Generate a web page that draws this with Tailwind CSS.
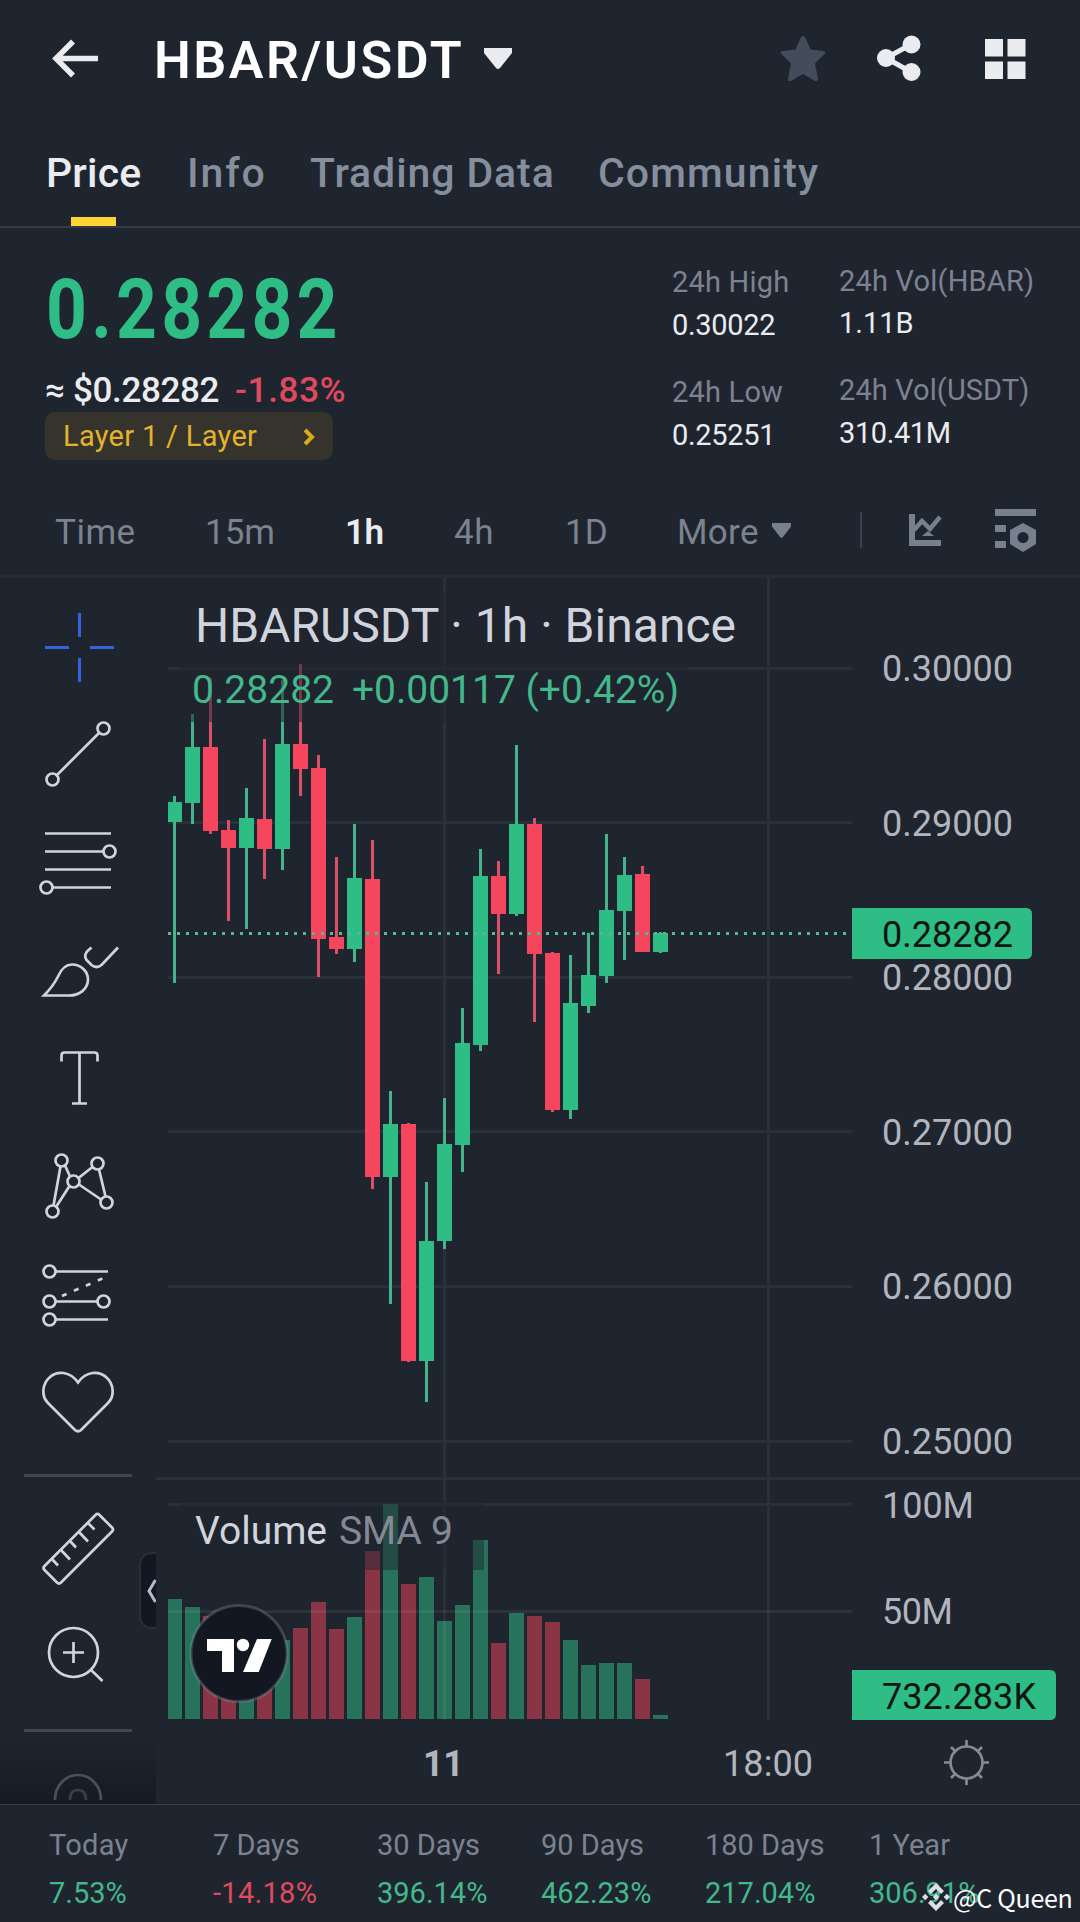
<!DOCTYPE html>
<html lang="en">
<head>
    <meta charset="UTF-8">
    <meta name="viewport" content="width=device-width, initial-scale=1.0">
    <title>HBAR/USDT</title>
    <script src="https://cdn.jsdelivr.net/npm/@tailwindcss/browser@4"></script>
    <style>
        body { font-family: Roboto, 'Noto Sans', sans-serif; }
    </style>
</head>
<body class="w-[1080px] h-[1922px] overflow-hidden bg-[#1f252f] text-[#eaecef] flex flex-col whitespace-nowrap">
    <header class="h-[118px] shrink-0 flex items-center pl-[51px] pr-[54px]">
        <svg class="w-[48px] h-[40px]" viewBox="51 38 48 40" fill="none" stroke="#eaecef" stroke-width="5.5"><path d="M98 57.500H57M73 40.500L56 57.500l17 17"/></svg>
        <h1 class="ml-[55px] mt-[4px] w-[307px] text-[52px] leading-[60px] font-semibold text-white tracking-[2.500px]">HBAR/USDT</h1>
        <svg class="ml-[22px] w-[30px] h-[22px]" viewBox="483 48 30 22" fill="#eaecef"><path d="M484 48h28v5l-12 15q-2 2-4 0l-12-15z"/></svg>
        <svg class="ml-auto w-[48px] h-[48px]" viewBox="778 35 48 48" fill="#434c5a"><path d="M803 36q1.500 0 2.500 2l5 11.500 13 1.500q3 .8 1 3l-9.500 9.500 3 15q0 3.500-3 2.500l-12-7-12 7q-3 1-3-2.500l3-15-9.500-9.500q-2-2.200 1-3l13-1.500 5-11.500q1-2 2.500-2z"/></svg>
        <svg class="ml-[50px] w-[46px] h-[48px]" viewBox="876 35 46 48" fill="#eaecef"><circle cx="911.500" cy="44.500" r="9"/><circle cx="886" cy="58" r="9"/><circle cx="911.500" cy="72" r="9"/><path d="M911 44.500L886 58l25 14" fill="none" stroke="#eaecef" stroke-width="5"/></svg>
        <svg class="ml-[63px] w-[41px] h-[41px]" viewBox="985 38 41 41" fill="#eaecef"><path d="M985 38h18v17.500h-18zM1007.500 38h18v17.500h-18zM985 60.500h18V78h-18zM1007.500 60.500h18V78h-18z"/></svg>
    </header>

    <nav class="h-[110px] shrink-0 border-b-2 border-[#353a44] flex text-[41px] leading-[50px] font-medium text-[#848e9c] pl-[46px] pt-[30px]">
        <div class="w-[141px] relative text-[#eaecef] tracking-[0.200px]">Price
            <span class="absolute left-[25px] top-[69px] w-[45px] h-[9px] bg-[#fcd535]"></span>
        </div>
        <div class="w-[123px] tracking-[1.900px]">Info</div>
        <div class="w-[288px] tracking-[0.900px]">Trading Data</div>
        <div class="tracking-[1.100px]">Community</div>
    </nav>

    <section class="h-[262px] shrink-0 flex pl-[45px]">
        <div class="w-[627px] pt-[33px]">
            <div class="ml-[1px] w-fit text-[84px] leading-[98px] font-bold text-[#2ebd85] tracking-[4.900px] origin-left scale-x-85">0.28282</div>
            <div class="mt-[11px] h-[42px] flex text-[35px] leading-[42px] font-medium">
                <span class="w-[190px] tracking-[-0.350px]">≈ $0.28282</span>
                <span class="text-[#e04a5f] tracking-[0.700px]">-1.83%</span>
            </div>
            <div class="w-[288px] h-[48px] rounded-[10px] bg-[#35332c] flex items-center pl-[18px] pt-[2px] text-[29px] text-[#e2b32b]">
                <span class="tracking-[0.300px]">Layer 1 / Layer</span>
                <svg class="ml-auto mr-[18px] w-[12px] h-[18px]" viewBox="0 0 12 18" fill="none" stroke="#dcaa1e" stroke-width="4"><path d="M2 2l7 7-7 7"/></svg>
            </div>
        </div>
        <div class="w-[167px] pt-[36px] text-[29px] leading-[36px]">
            <div class="text-[#7c8290] tracking-[0.200px]">24h High</div>
            <div class="mt-[7px] tracking-[-0.300px] font-[450]">0.30022</div>
            <div class="mt-[31px] text-[#7c8290] tracking-[0.200px]">24h Low</div>
            <div class="mt-[7px] tracking-[-0.300px] font-[450]">0.25251</div>
        </div>
        <div class="pt-[35px] text-[29px] leading-[36px]">
            <div class="text-[#7c8290] tracking-[0.200px]">24h Vol(HBAR)</div>
            <div class="mt-[6px] font-[450]">1.11B</div>
            <div class="mt-[31px] text-[#7c8290] tracking-[0.100px]">24h Vol(USDT)</div>
            <div class="mt-[7px] tracking-[-0.400px] font-[450]">310.41M</div>
        </div>
    </section>

    <section class="h-[88px] shrink-0 border-b-3 border-[#262c36] flex items-center text-[35px] text-[#7c8290] pl-[55px] pt-[2px]">
        <div class="w-[150px] tracking-[0.500px]">Time</div>
        <div class="w-[140px]">15m</div>
        <div class="w-[109px] font-semibold tracking-[-0.500px] text-[#eaecef]">1h</div>
        <div class="w-[111px] tracking-[0.500px]">4h</div>
        <div class="w-[112px]">1D</div>
        <div class="w-[95px] tracking-[0.300px]">More</div>
        <svg class="mt-[-7px] w-[19px] h-[15px]" viewBox="0 0 19 15" fill="#76808f"><path d="M0 0h19v3.500L11 14q-1.500 1.500-3 0L0 3.500z"/></svg>
        <div class="ml-[69px] mt-[-7px] w-[2px] h-[36px] bg-[#3a414d]"></div>
        <svg class="ml-[46px] mt-[-8px] w-[34px] h-[34px]" viewBox="908 512 34 34" fill="none" stroke="#76808f"><path d="M912 513v32M909 542h32" stroke-width="6"/><path d="M914 529l8-9 8 8 10-12" stroke-width="4.500"/><path d="M922 535l6-5 6 5z" fill="#76808f" stroke="none"/></svg>
        <svg class="ml-[53px] mt-[-7px] w-[42px] h-[44px]" viewBox="995 508 42 44" fill="#76808f"><path d="M995 509h41v7h-41zM995 525h11v7h-11zM995 541h11v7h-11z"/><path fill-rule="evenodd" d="M1023 523l13 7v14l-13 8-13-8v-14zM1023 532a5.500 5.500 0 100 11 5.500 5.500 0 000-11z"/></svg>
    </section>

    <main class="h-[1226px] shrink-0 flex">
        <!-- drawing tools -->
        <aside class="w-[156px] shrink-0 flex flex-col relative overflow-hidden pt-[15px]">
            <svg class="w-full h-[108px] shrink-0" viewBox="0 593 156 108" stroke="#3563e0" stroke-width="3"><path d="M79.500 613v24M79.500 658v24M45 647.500h24M90 647.500h24"/></svg>
            <svg class="w-full h-[108px] shrink-0" viewBox="0 701 156 108" fill="none" stroke="#d1d4dc" stroke-width="2.700"><circle cx="52.500" cy="779.500" r="6"/><circle cx="103.500" cy="728.500" r="6"/><path d="M57 775l42-42"/></svg>
            <svg class="w-full h-[108px] shrink-0" viewBox="0 809 156 108" fill="none" stroke="#d1d4dc" stroke-width="2.700"><path d="M45 833.500h66M45 851.500h58M45 869.500h66M53 887.500h58"/><circle cx="109.500" cy="851.500" r="6"/><circle cx="46.500" cy="887.500" r="6"/></svg>
            <svg class="w-full h-[108px] shrink-0" viewBox="0 917 156 108" fill="none" stroke="#d1d4dc" stroke-width="2.700"><path d="M44 995.500c6-6 10-11 14-19 3-7 7-12 14-12 9 0 16 7 16 15 0 9-8 16-19 16z"/><path d="M91.500 947.500l-4 3.500q-4 4-1 9l5 5q5 4 10 0l16.500-17.500"/></svg>
            <svg class="w-full h-[108px] shrink-0" viewBox="0 1025 156 108" fill="none" stroke="#d1d4dc" stroke-width="2.700"><path d="M61.500 1061.500v-6q0-3 3-3h30q3 0 3 3v6M79.500 1052v52M72 1103.500h15"/></svg>
            <svg class="w-full h-[108px] shrink-0" viewBox="0 1133 156 108" fill="none" stroke="#d1d4dc" stroke-width="2.700"><path d="M60.500 1166.500l-7 39M65 1165.500l5 11M69.500 1186l-13.500 21M78.500 1178l14-11M99 1169.500l6.500 27M79 1184.500l22 15"/><circle cx="61.500" cy="1160.500" r="6"/><circle cx="97.500" cy="1163.500" r="6"/><circle cx="73.500" cy="1181.500" r="6"/><circle cx="52.500" cy="1211.500" r="6"/><circle cx="106.500" cy="1202.500" r="6"/></svg>
            <svg class="w-full h-[108px] shrink-0" viewBox="0 1241 156 108" fill="none" stroke="#d1d4dc" stroke-width="2.700"><path d="M56 1271.500h52M56 1301.500h41M56 1319.500h52"/><path d="M62 1296l44-19" stroke-dasharray="5 8"/><circle cx="49.500" cy="1271.500" r="6"/><circle cx="49.500" cy="1301.500" r="6"/><circle cx="103.500" cy="1301.500" r="6"/><circle cx="49.500" cy="1319.500" r="6"/></svg>
            <svg class="w-full h-[108px] shrink-0" viewBox="0 1349 156 108" fill="none" stroke="#d1d4dc" stroke-width="2.700"><path d="M78 1382.500C70 1371 57 1370.500 50 1377c-8 7-9 19-2 26l27 27q3 2.500 6 0l27-27c7-7 6-19-2-26-7-6.500-20-6-28 5.500z"/></svg>
            <div class="mt-[17px] ml-[24px] w-[108px] h-[3px] shrink-0 bg-[#434651]"></div>
            <svg class="mt-[18px] w-full h-[108px] shrink-0" viewBox="0 1495 156 108" fill="none" stroke="#d1d4dc" stroke-width="2.700"><path d="M95.500 1515q2-2 4 0l12.500 12.500q2 2 0 4L61 1582.500q-2 2-4 0L44.500 1570q-2-2 0-4zM52 1559l6 6.500M61 1550l9 9.500M70 1541l6 6.500M79 1532l9 9.500M88 1523l6.500 6.500"/></svg>
            <svg class="w-full h-[108px] shrink-0" viewBox="0 1603 156 108" fill="none" stroke="#d1d4dc" stroke-width="2.700"><circle cx="73.500" cy="1652.500" r="24.500"/><path d="M63 1652.500h21M73.500 1642v21M91 1670l11.500 11"/></svg>
            <div class="mt-[18px] ml-[24px] w-[108px] h-[3px] shrink-0 bg-[#434651]"></div>
            <div class="mt-[4px] h-[68px] shrink-0 bg-linear-to-b from-[#1f252f] to-[#161a24]">
                <svg class="w-full h-full" viewBox="0 1736 156 68" fill="none" stroke="#4b4f59" stroke-width="2.700"><path d="M55 1800c0-14 10-25 23-25s23 11 23 25"/><path d="M70 1800c0-7 3-10 8-10s8 3 8 10" stroke="#3a3e48"/></svg>
            </div>
            <div class="absolute right-0 top-[974px] w-[17px] h-[77px] rounded-l-[13px] bg-[#131722] border-2 border-r-0 border-[#2a2e39] flex items-center justify-end">
                <svg class="w-[9px] h-[24px]" viewBox="0 0 9 24" fill="none" stroke="#b2bccb" stroke-width="3"><path d="M8.500 1L2 12l6.500 11"/></svg>
            </div>
        </aside>

        <svg id="chart" class="w-[924px] h-[1226px]" viewBox="156 578 924 1226">
            <g fill="#2a303a">
                <path d="M168 667h684v3H168zM168 821h684v3H168zM168 976h684v3H168zM168 1130h684v3H168zM168 1285h684v3H168zM168 1440h684v3H168zM156 1477h924v3H156zM168 1503h684v3H168z"/>
                <path d="M443 578h3v1142h-3zM767 578h3v1142h-3z"/>
            </g>
            <g id="volume"></g>
            <path d="M168 1610h684v3H168z" fill="#fff" fill-opacity=".06"/>
            <path d="M443 1621h3v98h-3z" fill="#fff" fill-opacity=".06"/>
            <g id="candles"></g>
            <path d="M168 933.500H848" stroke="#55b894" stroke-width="3" stroke-dasharray="3 6"/>

            <!-- legends sit on a half transparent plate -->
            <rect x="180" y="592" width="508" height="130" fill="#1f252f" fill-opacity=".55"/>
            <rect x="180" y="1500" width="304" height="70" fill="#1f252f" fill-opacity=".5"/>
            <text x="195" y="642" font-size="48" fill="#d1d4dc" textLength="541">HBARUSDT · 1h · Binance</text>
            <g font-size="39" fill="#42b88b">
                <text x="192" y="703" textLength="142">0.28282</text>
                <text x="352" y="703" textLength="327">+0.00117 (+0.42%)</text>
            </g>
            <text x="195" y="1544" font-size="39" fill="#d1d4dc" textLength="132">Volume</text>
            <text x="339" y="1544" font-size="39" fill="#868993" textLength="114">SMA 9</text>

            <circle cx="239" cy="1653.500" r="48" fill="#131722" stroke="#9aa0ab" stroke-opacity=".3" stroke-width="3"/>
            <path d="M207 1639h27v33h-12v-21h-15zM257 1639h14.700l-13 33H243z" fill="#fff"/>
            <circle cx="243" cy="1645" r="6.200" fill="#fff"/>

            <g font-size="36" fill="#b2b5be">
                <text x="882" y="681" textLength="131">0.30000</text>
                <text x="882" y="836" textLength="131">0.29000</text>
                <text x="882" y="990" textLength="131">0.28000</text>
                <text x="882" y="1145" textLength="131">0.27000</text>
                <text x="882" y="1299" textLength="131">0.26000</text>
                <text x="882" y="1454" textLength="131">0.25000</text>
                <text x="882" y="1518" textLength="92">100M</text>
                <text x="882" y="1624" textLength="71">50M</text>
                <text x="723" y="1776" textLength="90">18:00</text>
                <text x="423" y="1776" font-weight="700" textLength="41">11</text>
            </g>
            <path d="M852 908h174q6 0 6 6v39q0 6-6 6H852zM852 1670h198q6 0 6 6v38q0 6-6 6H852z" fill="#2ebd85"/>
            <g font-size="36" fill="#0b1512">
                <text x="882" y="947" textLength="131">0.28282</text>
                <text x="882" y="1709" textLength="154">732.283K</text>
            </g>
            <g fill="none" stroke="#868993" stroke-width="2.700">
                <circle cx="966.500" cy="1762.500" r="16"/>
                <path d="M966.500 1740v7M966.500 1778v7M944 1762.500h7M982 1762.500h7M951 1747l5 5M977 1773l5 5M982 1747l-5 5M956 1773l-5 5"/>
            </g>
        </svg>
    </main>

    <footer class="h-[118px] shrink-0 relative border-t border-[#3a404a] flex pl-[49px] pt-[22px] text-[29px] leading-[36px] text-[#7c8290]">
        <div class="w-[164px] shrink-0"><div class="tracking-[0.300px]">Today</div><div class="mt-[12px] text-[#42b88b]">7.53%</div></div>
        <div class="w-[164px] shrink-0"><div>7 Days</div><div class="mt-[12px] text-[#e04a5f] tracking-[0.300px]">-14.18%</div></div>
        <div class="w-[164px] shrink-0"><div>30 Days</div><div class="mt-[12px] text-[#42b88b]">396.14%</div></div>
        <div class="w-[164px] shrink-0"><div>90 Days</div><div class="mt-[12px] text-[#42b88b]">462.23%</div></div>
        <div class="w-[164px] shrink-0"><div>180 Days</div><div class="mt-[12px] text-[#42b88b]">217.04%</div></div>
        <div class="w-[164px] shrink-0"><div>1 Year</div><div class="mt-[12px] text-[#42b88b]">306.91%</div></div>
        <div class="absolute left-[922px] top-[77px] flex items-center gap-[3px] text-white">
            <svg class="w-[28px] h-[28px]" viewBox="0 0 28 28" fill="#dcdfe3"><path d="M14 0l8 8-3 3-5-5-5 5-3-3zM14 28l8-8-3-3-5 5-5-5-3 3zM14 10.800l3.200 3.200-3.200 3.200-3.200-3.200zM3.200 10.800L6.400 14l-3.200 3.200L0 14zM24.800 10.800L28 14l-3.200 3.200-3.200-3.200z"/></svg>
            <span class="font-['Noto_Sans_CJK_SC',sans-serif] font-normal text-[25px] leading-[30px] tracking-[-0.300px]">@C Queen</span>
        </div>
    </footer>

<script>
// up, high, body top, body bottom, low, volume top
const bars = [
    [1, 796, 802, 822, 983, 1599], [1, 714, 747, 803, 824, 1607], [0, 678, 747, 831, 834, 1616],
    [0, 820, 830, 848, 921, 1650], [1, 788, 818, 848, 929, 1655], [0, 739, 819, 849, 879, 1650],
    [1, 680, 744, 849, 870, 1640], [0, 664, 744, 769, 796, 1628], [0, 755, 768, 939, 977, 1602],
    [0, 857, 937, 949, 954, 1629], [1, 824, 878, 949, 962, 1617], [0, 840, 879, 1177, 1189, 1551],
    [1, 1091, 1124, 1177, 1304, 1504], [0, 1123, 1124, 1361, 1362, 1584], [1, 1182, 1241, 1361, 1402, 1577],
    [1, 1098, 1144, 1241, 1249, 1621], [1, 1008, 1043, 1145, 1172, 1605], [1, 849, 876, 1045, 1051, 1540],
    [0, 861, 876, 914, 974, 1643], [1, 745, 824, 914, 916, 1613], [0, 818, 824, 954, 1022, 1616],
    [0, 952, 953, 1110, 1112, 1622], [1, 955, 1003, 1110, 1119, 1640], [1, 933, 975, 1006, 1013, 1665],
    [1, 834, 910, 976, 983, 1663], [1, 857, 875, 911, 960, 1663], [0, 866, 874, 952, 952, 1679],
    [1, 932, 933, 952, 953, 1715]
];
const rect = (x, y, w, h, fill) => `<rect x="${x}" y="${y}" width="${w}" height="${h}" fill="${fill}"/>`;
let candles = '', volume = '';
bars.forEach(([up, high, top, bottom, low, vol], i) => {
    const x = i ? 167 + i * 18 : 168;
    const w = i ? 15 : 14;
    candles += rect(173 + i * 18, high, 3, low - high, up ? '#45b48a' : '#db5067');
    candles += rect(x, top, w, bottom - top, up ? '#2ebd85' : '#f6465d');
    volume += rect(x, vol, w, 1719 - vol, up ? '#27725b' : '#8a3546');
});
document.getElementById('candles').innerHTML = candles;
document.getElementById('volume').innerHTML = volume;
</script>
</body>
</html>
